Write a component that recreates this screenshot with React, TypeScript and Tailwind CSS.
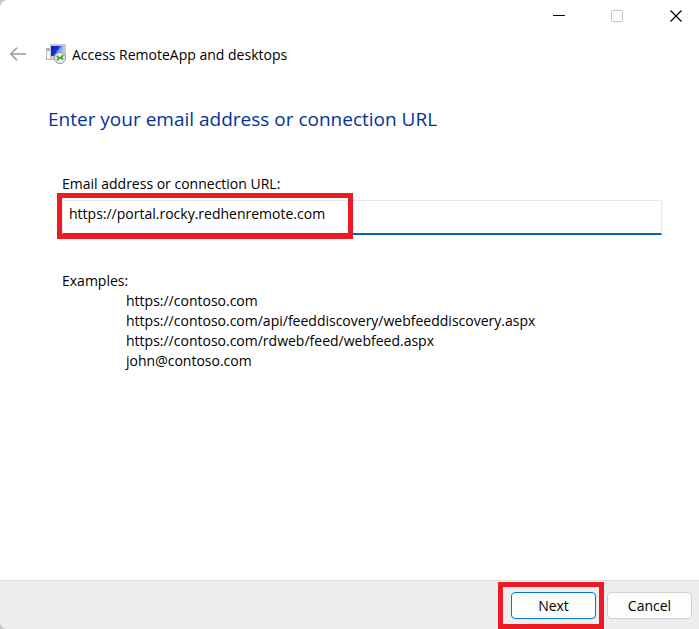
import { useState } from "react";

const examples = [
  "https://contoso.com",
  "https://contoso.com/api/feeddiscovery/webfeeddiscovery.aspx",
  "https://contoso.com/rdweb/feed/webfeed.aspx",
  "john@contoso.com",
];

function RemoteAppIcon() {
  return (
    <svg width="20" height="20" viewBox="0 0 20 20" aria-hidden="true">
      <defs>
        <linearGradient id="screen" x1="0" y1="0" x2="1" y2="0.6">
          <stop offset="0" stopColor="#0a1cae" />
          <stop offset="0.55" stopColor="#1232dd" />
          <stop offset="0.65" stopColor="#6f93ee" />
          <stop offset="1" stopColor="#b4ccf8" />
        </linearGradient>
      </defs>
      <rect x="0.5" y="4.5" width="9" height="11" fill="#f3f5f8" stroke="#b4b9c6" />
      <rect x="1" y="5" width="4" height="2" fill="#9fb2d6" />
      <rect x="4" y="0" width="16" height="15" fill="#c9c8c5" />
      <rect x="5" y="2" width="12" height="10" fill="url(#screen)" />
      <circle cx="14" cy="14" r="5.5" fill="#eef0ee" stroke="#929594" />
      <path
        d="M10.8 12l2.4 2.2-2.4 2.2M17.2 11.2l-2.4 2.2 2.4 2.2"
        fill="none"
        stroke="#2fa02c"
        strokeWidth="1.7"
      />
    </svg>
  );
}

function TitleBar() {
  const button = "flex h-8 w-12 items-center justify-center";
  return (
    <div className="flex justify-end gap-[10px]">
      <button aria-label="Minimize" className={button}>
        <svg width="12" height="12" viewBox="0 0 12 12">
          <path d="M0 5.5h12" stroke="#000" />
        </svg>
      </button>
      <button aria-label="Maximize" disabled className={button}>
        <svg width="12" height="12" viewBox="0 0 12 12">
          <rect x="0.5" y="0.5" width="11" height="11" rx="1" fill="none" stroke="#c4c4c4" />
        </svg>
      </button>
      <button aria-label="Close" className={button}>
        <svg width="14" height="12" viewBox="0 0 14 12">
          <path d="M2.5 0.5l11 11M13.5 0.5l-11 11" stroke="#000" strokeWidth="1.2" />
        </svg>
      </button>
    </div>
  );
}

export default function App() {
  const [url, setUrl] = useState("https://portal.rocky.redhenremote.com");
  return (
    <div className="min-h-screen bg-[#c8c8c8]">
      <div className="flex min-h-screen flex-col overflow-hidden rounded-l-lg bg-white font-['Open_Sans','Noto_Sans',sans-serif] text-sm leading-5 text-black">
        <TitleBar />
        <header className="flex items-center pt-[11px] pl-[10px]">
          <button aria-label="Back" className="mr-5">
            <svg width="16" height="14" viewBox="0 0 16 14" fill="none" stroke="#999" strokeWidth="1.5">
              <path d="M0.8 7H16M7 0.8L0.8 7 7 13.2" />
            </svg>
          </button>
          <RemoteAppIcon />
          <span className="ml-[6px] pt-0.5">Access RemoteApp and desktops</span>
        </header>

        <main className="flex-1 pt-10 pr-[37px] pb-6 pl-12">
          <h1 className="text-[19px] leading-7 text-[#003399]">
            Enter your email address or connection URL
          </h1>
          <div className="pt-[41px] pl-[14px]">
            <label htmlFor="url" className="block">
              Email address or connection URL:
            </label>
            <div className="relative mt-[6px]">
              <input
                id="url"
                type="text"
                value={url}
                onChange={(e) => setUrl(e.target.value)}
                className="block h-[35px] w-full border border-[#e8e8e8] border-b-2 border-b-[#0067c0] bg-white pr-2 pb-2 pl-[6px] outline-none"
              />
              <div className="pointer-events-none absolute -top-[7px] -left-[5px] h-[46px] w-[296px] border-5 border-[#ed1c24]" />
            </div>
            <p className="mt-9">Examples:</p>
            <ul className="pl-16">
              {examples.map((example) => (
                <li key={example}>{example}</li>
              ))}
            </ul>
          </div>
        </main>

        <footer className="flex items-end justify-end gap-[3px] border-t border-[#dfdfdf] bg-[#eeeeee] pt-px pr-[7px]">
          <div className="border-5 border-[#ed1c24] py-[5px] pr-[3px] pl-2">
            <button className="block h-[27px] w-[85px] rounded border border-[#0078d4] bg-[#fdfdfd]">
              Next
            </button>
          </div>
          <button className="mb-[10px] h-[27px] w-[85px] rounded border border-[#d0d0d0] bg-[#fdfdfd]">
            Cancel
          </button>
        </footer>
      </div>
    </div>
  );
}
